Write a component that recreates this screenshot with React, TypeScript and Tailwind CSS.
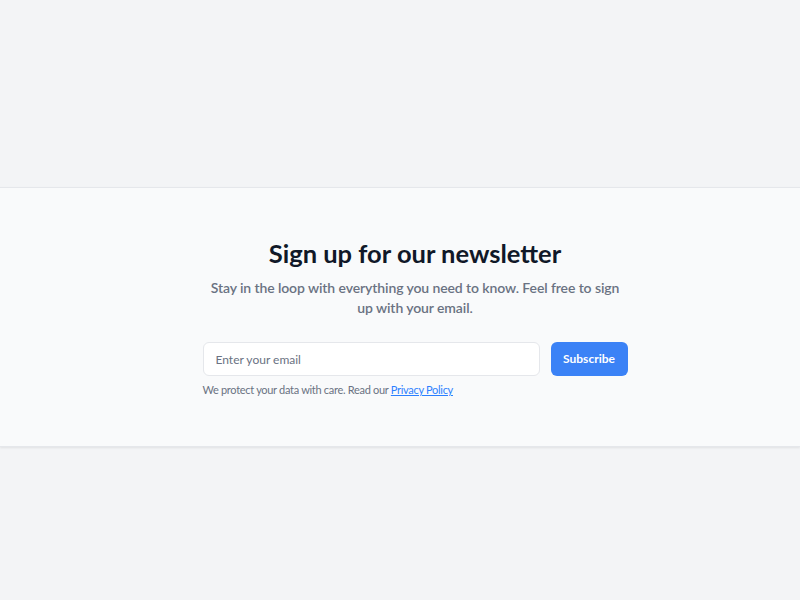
import React from "react";

export default function App() {
  return (
    <div className="min-h-screen bg-[#f3f4f6] flex flex-col" style={{ fontFamily: 'Lato, "Liberation Sans", sans-serif' }}>
      <div className="h-[187px]" />
      <section className="bg-[#f9fafb] border-t border-gray-200 shadow-[0_1px_2px_rgba(0,0,0,0.08)] border-b border-b-gray-200 py-12 pl-[30px]">
        <div className="mx-auto w-[425px] flex flex-col items-center">
          <h2 className="text-[25.5px] font-bold text-gray-900 leading-[34px] mb-0.5">Sign up for our newsletter</h2>
          <p className="mt-1.5 text-sm leading-5 font-semibold text-gray-500 text-center max-w-[420px] tracking-[-0.1px]">
            Stay in the loop with everything you need to know. Feel free to sign up with your email.
          </p>
          <form className="mt-6 w-full" onSubmit={(e) => e.preventDefault()}>
            <div className="flex gap-[11px]">
              <input
                type="email"
                placeholder="Enter your email"
                className="flex-1 h-[34px] rounded-md border border-gray-200 bg-white px-3 text-xs text-gray-900 placeholder:text-gray-500 outline-none"
              />
              <button type="submit" className="h-[34px] w-[77px] rounded-md bg-[#3b82f6] text-white text-xs font-bold">
                Subscribe
              </button>
            </div>
            <p className="mt-1.5 text-[11px] leading-4 text-gray-500 tracking-[-0.3px]">
              We protect your data with care. Read our{" "}
              <a href="#" className="text-blue-500 underline">Privacy Policy</a>
            </p>
          </form>
        </div>
      </section>
      <div className="flex-1" />
    </div>
  );
}
